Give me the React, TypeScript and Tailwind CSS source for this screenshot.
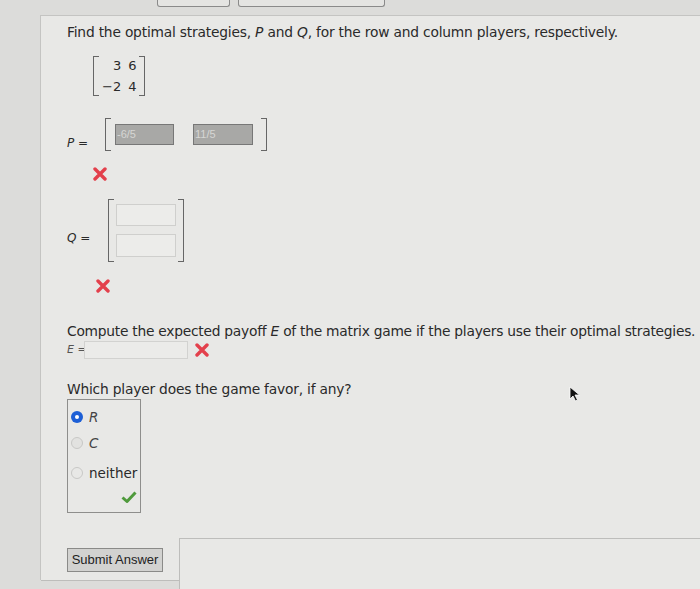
import React from "react";

const font = { fontFamily: '"DejaVu Sans", Verdana, sans-serif' };

function RedX({ className = "" }: { className?: string }) {
  return (
    <svg width="14" height="14" viewBox="0 0 14 14" className={className}>
      <path d="M2 2 L12 12 M12 2 L2 12" stroke="#e3404c" strokeWidth="3.4" strokeLinecap="round" />
    </svg>
  );
}

function Bracket({ side, h }: { side: "l" | "r"; h: number }) {
  return (
    <div
      className={`w-[6px] border-[#666] ${side === "l" ? "border-l border-t border-b" : "border-r border-t border-b"}`}
      style={{ height: h }}
    />
  );
}

export default function App() {
  return (
    <div className="w-[700px] h-[589px] overflow-hidden bg-[#dcdcda] text-[#2a2a2a] relative" style={font}>
      {/* top strip */}
      <div className="h-[15px] flex">
        <div className="ml-[157px] w-[73px] h-[7px] border-b border-l border-r border-[#8a8a8a] rounded-b-[3px] bg-[#e4e4e2]" />
        <div className="ml-[8px] w-[147px] h-[7px] border-b border-l border-r border-[#8a8a8a] rounded-b-[3px] bg-[#e4e4e2]" />
      </div>
      <div className="flex">
        <div className="w-[40px] shrink-0" />
        <div className="flex-1 h-[565px] bg-[#e8e8e6] border-l border-t border-[#c4c4c2] relative">
          <div className="pl-[26px] pt-[6px]">
            <div className="text-[13.8px] leading-[20px] tracking-[-0.2px] whitespace-nowrap">
              Find the optimal strategies, <i>P</i> and <i>Q</i>, for the row and column players, respectively.
            </div>
            {/* matrix */}
            <div className="flex items-center ml-[26px] mt-[13px]">
              <Bracket side="l" h={40} />
              <div className="grid grid-cols-[auto_auto] gap-x-[7px] text-[13px] leading-[21px] px-[3px] text-right">
                <span>3</span><span>6</span>
                <span>−2</span><span>4</span>
              </div>
              <Bracket side="r" h={40} />
            </div>
            {/* P row */}
            <div className="flex items-center mt-[19px]">
              <span className="text-[12px] w-[38px] pt-[18px] whitespace-nowrap"><i>P</i> =</span>
              <Bracket side="l" h={33} />
              <div className="ml-[4px] w-[59px] h-[21px] bg-[#a8a8a6] border border-[#777] text-[11px] leading-[18px] text-[#d6d6d4] pl-[1px]" style={{ fontFamily: '"Liberation Sans", Arial, sans-serif' }}>-6/5</div>
              <div className="ml-[19px] w-[60px] h-[21px] bg-[#a8a8a6] border border-[#777] text-[11px] leading-[18px] text-[#d6d6d4] pl-[1px]" style={{ fontFamily: '"Liberation Sans", Arial, sans-serif' }}>11/5</div>
              <div className="ml-[8px]"><Bracket side="r" h={33} /></div>
            </div>
            <div className="ml-[26px] mt-[15px] h-[14px]"><RedX /></div>
            {/* Q */}
            <div className="flex items-center mt-[18px]">
              <span className="text-[12px] w-[41px] pt-[14px] whitespace-nowrap"><i>Q</i> =</span>
              <Bracket side="l" h={63} />
              <div className="flex flex-col gap-[8px] px-[2px]">
                <div className="w-[60px] h-[22px] border border-[#cfcfcd] bg-[#ececea]" />
                <div className="w-[60px] h-[23px] border border-[#cfcfcd] bg-[#ececea]" />
              </div>
              <Bracket side="r" h={63} />
            </div>
            <div className="ml-[29px] mt-[17px] h-[14px]"><RedX /></div>
            {/* compute */}
            <div className="mt-[28px] text-[13.8px] leading-[20px] tracking-[-0.25px] whitespace-nowrap">
              Compute the expected payoff <i>E</i> of the matrix game if the players use their optimal strategies.
            </div>
            <div className="flex items-center h-[18px]">
              <span className="text-[11px] w-[17px] text-[#555] whitespace-nowrap"><i>E</i> =</span>
              <div className="w-[104px] h-[18px] border border-[#d2d2d0] bg-[#ebebe9]" />
              <RedX className="ml-[7px]" />
            </div>
            {/* which */}
            <div className="mt-[20px] text-[13.8px] leading-[20px] tracking-[-0.2px] whitespace-nowrap">Which player does the game favor, if any?</div>
            <div className="w-[74px] h-[114px] border border-[#8e8e8c] relative text-[13.5px]">
              <div className="flex items-center mt-[9px] ml-[3px] h-[16px]">
                <span className="w-[12px] h-[12px] rounded-full bg-[#1d5fd6] flex items-center justify-center">
                  <span className="w-[4px] h-[4px] rounded-full bg-white" />
                </span>
                <i className="ml-[6px] text-[#444]">R</i>
              </div>
              <div className="flex items-center mt-[10px] ml-[3px] h-[16px]">
                <span className="w-[12px] h-[12px] rounded-full border border-[#c8c8c6] bg-[#e2e2e0]" />
                <i className="ml-[6px] text-[#444]">C</i>
              </div>
              <div className="flex items-center mt-[14px] ml-[3px] h-[16px]">
                <span className="w-[12px] h-[12px] rounded-full border border-[#c8c8c6] bg-[#e8e8e6]" />
                <span className="ml-[6px]">neither</span>
              </div>
              <svg width="16" height="12" viewBox="0 0 16 12" className="absolute left-[53px] top-[91px]">
                <path d="M1.5 6.5 L6 10.5 L14.5 1.5" stroke="#4f9a3c" strokeWidth="3" fill="none" strokeLinejoin="round" />
              </svg>
            </div>
            {/* submit */}
            <div className="flex mt-[25px]">
              <button className="mt-[10px] w-[96px] h-[24px] bg-[#d2d2d0] border border-[#8a8a88] text-[13px] text-[#222] leading-[20px]" style={{ fontFamily: '"Liberation Sans", Arial, sans-serif' }}>
                Submit Answer
              </button>
              <div className="ml-[16px] flex-1 h-[60px] border-l border-t border-[#bdbdbb] bg-[#e8e8e6]" />
            </div>
          </div>
          <div className="absolute left-0 top-[564px] w-[138px] border-b border-[#bdbdbb]" />
          {/* cursor */}
          <svg width="12" height="16" viewBox="0 0 12 16" className="absolute left-[528px] top-[370px]">
            <path d="M1 1 L1 13 L4 10 L6.5 15 L8.5 14 L6 9 L10.5 9 Z" fill="#111" stroke="#fff" strokeWidth="0.8" />
          </svg>
        </div>
      </div>
    </div>
  );
}
